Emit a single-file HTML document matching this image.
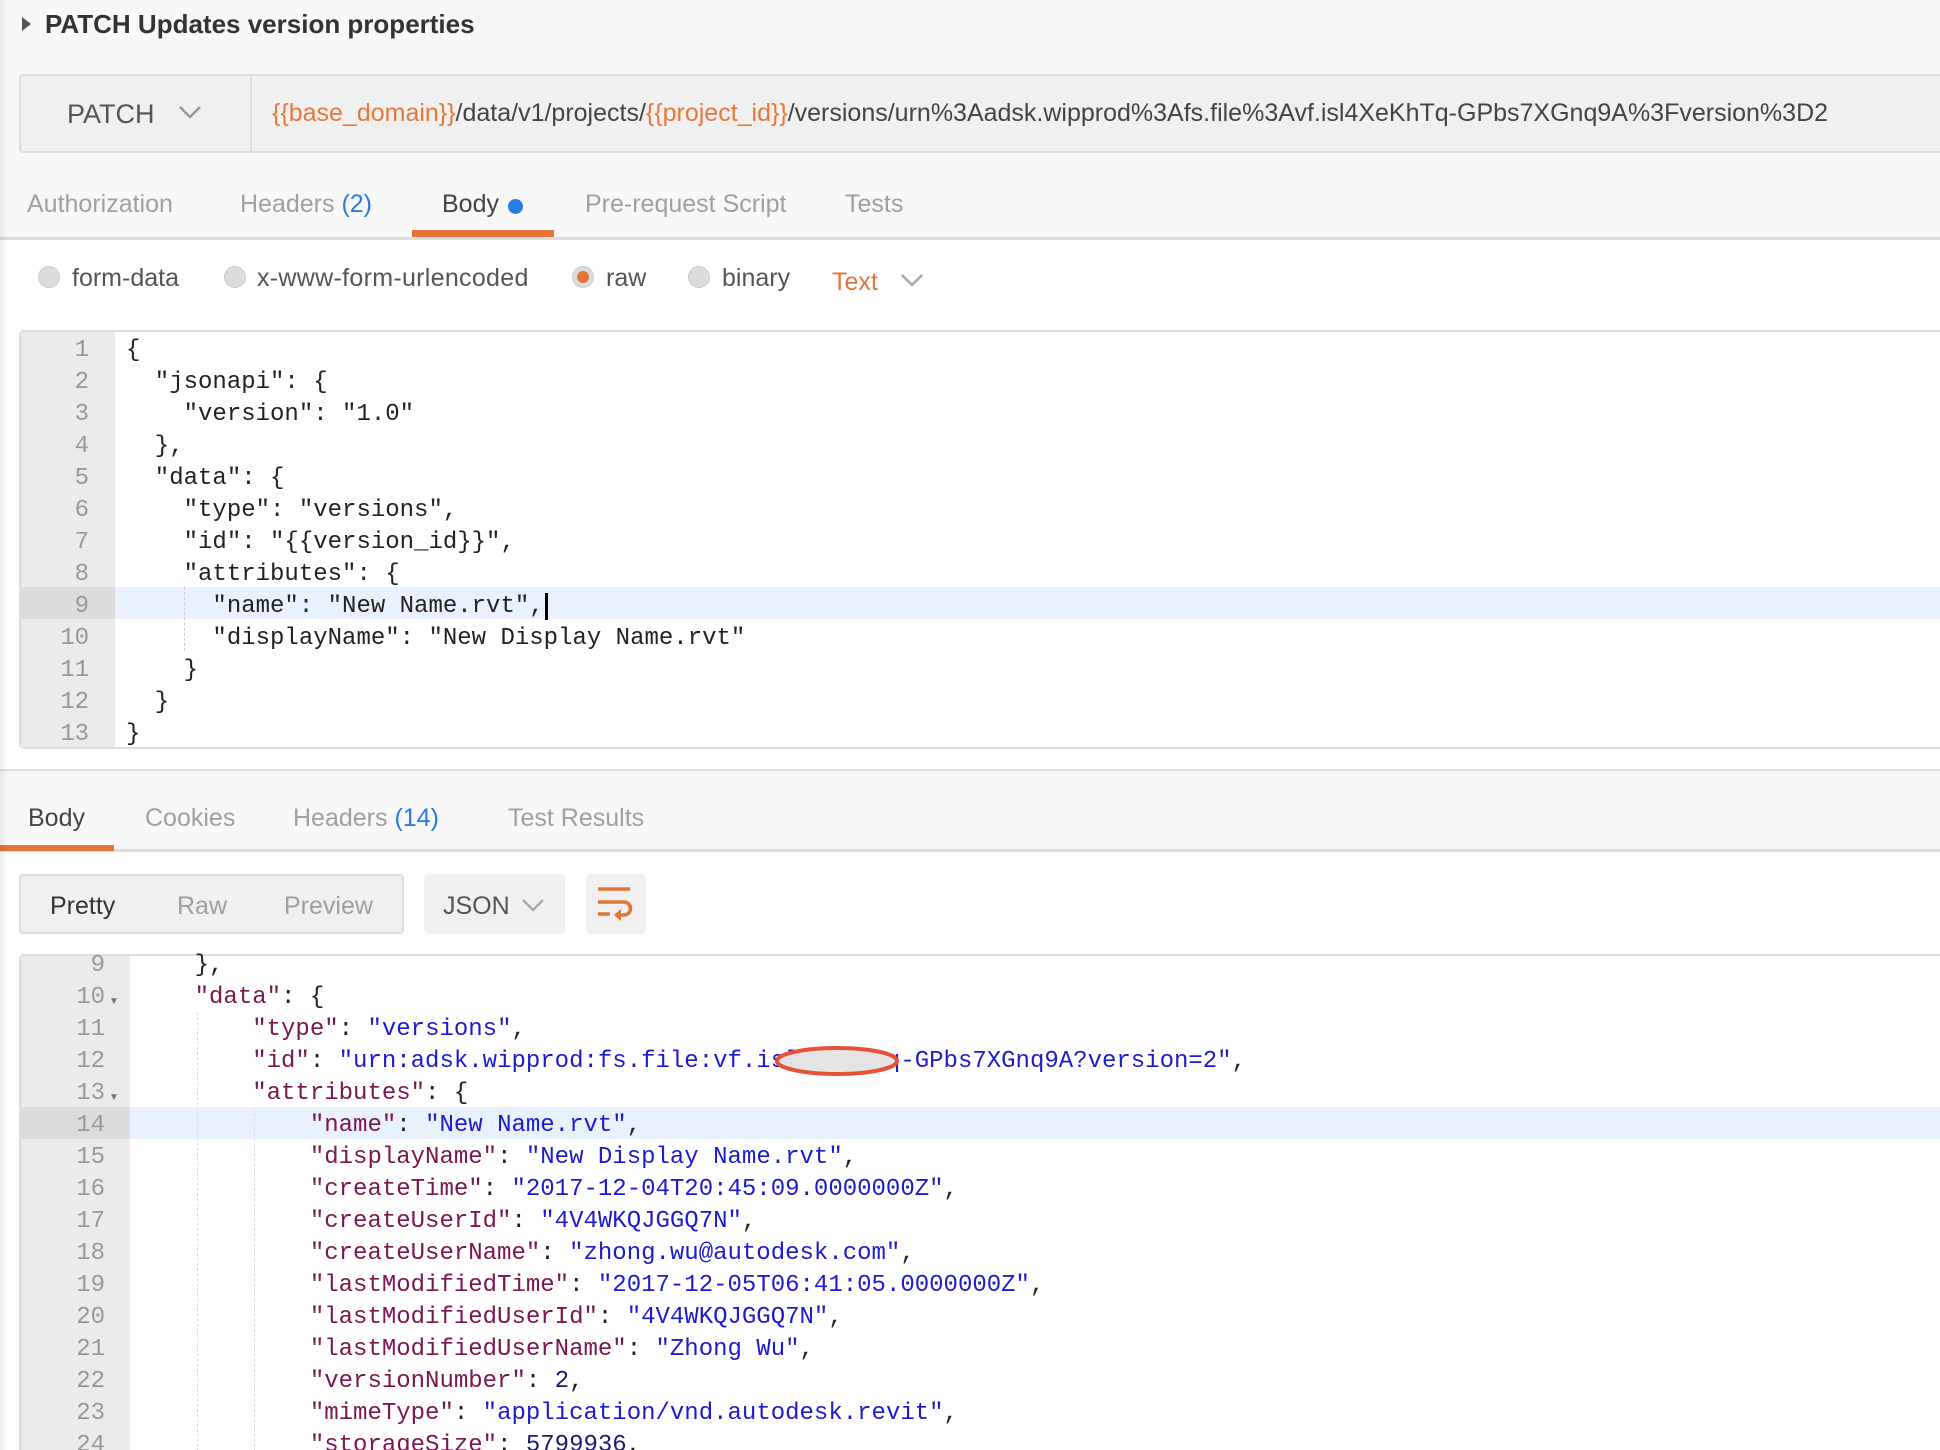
<!DOCTYPE html>
<html style="overflow:hidden;width:1940px;height:1450px"><head><meta charset="utf-8"><style>
*{margin:0;padding:0;box-sizing:border-box}
body{width:1940px;height:1450px;overflow:hidden;background:#fff;font-family:"Liberation Sans",sans-serif;position:relative}
.a{position:absolute;white-space:pre}
.ui{font-size:25px;color:#a0a0a0}
.mono{font-family:"Liberation Mono",monospace;font-size:24px;line-height:32px}
.k{color:#7a1650}.s{color:#1c1ccf}.n{color:#1a1a6e}
.radio{position:absolute;width:22px;height:22px;border-radius:50%;background:#ddd;border:1px solid #ccc}
</style></head><body>
<div class="a" style="left:0;top:0;width:1940px;height:239px;background:#f8f8f8"></div>
<div class="a" style="left:22px;top:17px;width:0;height:0;border-left:9px solid #555;border-top:7px solid transparent;border-bottom:7px solid transparent"></div>
<div class="a" style="left:45px;top:9px;font-size:26px;font-weight:bold;color:#333">PATCH Updates version properties</div>
<div class="a" style="left:19px;top:74px;width:1925px;height:79px;background:#f0f0f0;border:2px solid #ddd;border-right:none;border-radius:4px 0 0 4px"></div>
<div class="a" style="left:250px;top:76px;width:2px;height:75px;background:#ddd"></div>
<div class="a" style="left:67px;top:99px;font-size:27px;color:#555">PATCH</div>
<svg class="a" style="left:178px;top:104px" width="24" height="16"><path d="M2 3 L12 13 L22 3" fill="none" stroke="#999" stroke-width="2.5"/></svg>
<div class="a" style="left:272px;top:99px;font-size:25px;color:#444"><span style="color:#e8783a">{{base_domain}}</span>/data/v1/projects/<span style="color:#e8783a">{{project_id}}</span>/versions/urn%3Aadsk.wipprod%3Afs.file%3Avf.isl4XeKhTq-GPbs7XGnq9A%3Fversion%3D2</div>
<div class="a ui" style="left:27px;top:190px">Authorization</div>
<div class="a ui" style="left:240px;top:190px">Headers <span style="color:#2a7ae2">(2)</span></div>
<div class="a ui" style="left:442px;top:190px;color:#444">Body</div>
<div class="a" style="left:508px;top:199px;width:15px;height:15px;border-radius:50%;background:#2a7ae2"></div>
<div class="a ui" style="left:585px;top:190px">Pre-request Script</div>
<div class="a ui" style="left:845px;top:190px">Tests</div>
<div class="a" style="left:0;top:237px;width:1940px;height:3px;background:#ddd"></div>
<div class="a" style="left:412px;top:230px;width:142px;height:7px;background:#e4743a"></div>
<div class="radio" style="left:38px;top:266px"></div>
<div class="a ui" style="left:72px;top:264px;color:#555">form-data</div>
<div class="radio" style="left:224px;top:266px"></div>
<div class="a ui" style="left:257px;top:264px;color:#555;letter-spacing:0.3px">x-www-form-urlencoded</div>
<div class="radio" style="left:572px;top:266px;background:#ddd"></div>
<div class="a" style="left:577px;top:271px;width:12px;height:12px;border-radius:50%;background:#e4743a"></div>
<div class="a ui" style="left:606px;top:264px;color:#555">raw</div>
<div class="radio" style="left:688px;top:266px"></div>
<div class="a ui" style="left:722px;top:264px;color:#555">binary</div>
<div class="a ui" style="left:832px;top:268px;color:#e4743a">Text</div>
<svg class="a" style="left:900px;top:272px" width="24" height="16"><path d="M2 3 L12 13 L22 3" fill="none" stroke="#aaa" stroke-width="2.5"/></svg>
<div class="a" style="left:19px;top:330px;width:1925px;height:419px;border:2px solid #ddd;border-right:none;border-radius:5px 0 0 5px;background:#fff"></div>
<div class="a" style="left:21px;top:332px;width:94px;height:415px;background:#ebebeb"></div>
<div class="a" style="left:115px;top:587px;width:1825px;height:32px;background:#e9f1fc"></div>
<div class="a" style="left:21px;top:587px;width:94px;height:32px;background:#dcdcdc"></div>
<div class="a mono" style="left:21px;top:335px;width:68px;text-align:right;color:#999">1
2
3
4
5
6
7
8
9
10
11
12
13</div>
<div class="a" style="left:184px;top:587px;height:64px;border-left:1px dashed #ccc"></div>
<div class="a mono" style="left:126px;top:335px;color:#222">{
  "jsonapi": {
    "version": "1.0"
  },
  "data": {
    "type": "versions",
    "id": "{{version_id}}",
    "attributes": {
      "name": "New Name.rvt",<span style="border-left:3px solid #000;margin-left:1px"></span>
      "displayName": "New Display Name.rvt"
    }
  }
}</div>
<div class="a" style="left:0;top:769px;width:1940px;height:83px;background:#f8f8f8;border-top:2px solid #ddd;border-bottom:3px solid #ddd"></div>
<div class="a ui" style="left:28px;top:804px;color:#444">Body</div>
<div class="a ui" style="left:145px;top:804px">Cookies</div>
<div class="a ui" style="left:293px;top:804px">Headers <span style="color:#2a7ae2">(14)</span></div>
<div class="a ui" style="left:508px;top:804px">Test Results</div>
<div class="a" style="left:0;top:845px;width:114px;height:6px;background:#e4743a"></div>
<div class="a" style="left:19px;top:874px;width:385px;height:60px;background:#f0f0f0;border:2px solid #ddd;border-radius:4px"></div>
<div class="a ui" style="left:50px;top:892px;color:#333">Pretty</div>
<div class="a ui" style="left:177px;top:892px">Raw</div>
<div class="a ui" style="left:284px;top:892px">Preview</div>
<div class="a" style="left:424px;top:874px;width:141px;height:60px;background:#f0f0f0;border-radius:4px"></div>
<div class="a ui" style="left:443px;top:892px;color:#555">JSON</div>
<svg class="a" style="left:521px;top:897px" width="24" height="16"><path d="M2 3 L12 13 L22 3" fill="none" stroke="#aaa" stroke-width="2.5"/></svg>
<div class="a" style="left:586px;top:874px;width:60px;height:60px;background:#f0f0f0;border-radius:4px"></div>
<svg class="a" style="left:586px;top:874px" width="60" height="60"><g stroke="#e4743a" stroke-width="3.5" fill="none"><path d="M12 15 H44"/><path d="M12 28 H38 a6.5 6.5 0 0 1 0 13 H32"/><path d="M12 40 H24"/></g><path d="M28 41 L35 35 L35 47 Z" fill="#e4743a"/></svg>
<div class="a" style="left:19px;top:954px;width:1921px;height:496px;border-top:2px solid #ddd;border-left:2px solid #ddd;border-radius:5px 0 0 0;background:#fff"></div>
<div class="a" style="left:21px;top:956px;width:109px;height:494px;background:#ebebeb"></div>
<div class="a" style="left:130px;top:1107px;width:1810px;height:32px;background:#e9f1fc"></div>
<div class="a" style="left:21px;top:1107px;width:109px;height:32px;background:#dcdcdc"></div>
<div class="a mono" style="left:21px;top:950px;width:84px;text-align:right;color:#999">9
10
11
12
13
14
15
16
17
18
19
20
21
22
23
24</div>
<div class="a" style="left:109px;top:996px;font-size:10px;color:#777">▼</div>
<div class="a" style="left:109px;top:1092px;font-size:10px;color:#777">▼</div>
<div class="a" style="left:197px;top:1012px;height:440px;border-left:1px dashed #ddd"></div>
<div class="a" style="left:254px;top:1108px;height:344px;border-left:1px dashed #ddd"></div>
<div class="a mono" style="left:137px;top:950px;color:#222">    },
    <span class="k">"data"</span>: {
        <span class="k">"type"</span>: <span class="s">"versions"</span>,
        <span class="k">"id"</span>: <span class="s">"urn:adsk.wipprod:fs.file:vf.isl4XeKhTq-GPbs7XGnq9A?version=2"</span>,
        <span class="k">"attributes"</span>: {
            <span class="k">"name"</span>: <span class="s">"New Name.rvt"</span>,
            <span class="k">"displayName"</span>: <span class="s">"New Display Name.rvt"</span>,
            <span class="k">"createTime"</span>: <span class="s">"2017-12-04T20:45:09.0000000Z"</span>,
            <span class="k">"createUserId"</span>: <span class="s">"4V4WKQJGGQ7N"</span>,
            <span class="k">"createUserName"</span>: <span class="s">"zhong.wu@autodesk.com"</span>,
            <span class="k">"lastModifiedTime"</span>: <span class="s">"2017-12-05T06:41:05.0000000Z"</span>,
            <span class="k">"lastModifiedUserId"</span>: <span class="s">"4V4WKQJGGQ7N"</span>,
            <span class="k">"lastModifiedUserName"</span>: <span class="s">"Zhong Wu"</span>,
            <span class="k">"versionNumber"</span>: <span class="n">2</span>,
            <span class="k">"mimeType"</span>: <span class="s">"application/vnd.autodesk.revit"</span>,
            <span class="k">"storageSize"</span>: <span class="n">5799936</span>,</div>
<svg class="a" style="left:770px;top:1042px" width="134" height="40"><ellipse cx="67" cy="19" rx="60" ry="13" fill="#e4e4e4" stroke="#e8503a" stroke-width="4"/></svg>
<div class="a" style="left:0;top:0;width:8px;height:1450px;background:linear-gradient(to right,rgba(0,0,0,0.07),rgba(0,0,0,0))"></div>
</body></html>
